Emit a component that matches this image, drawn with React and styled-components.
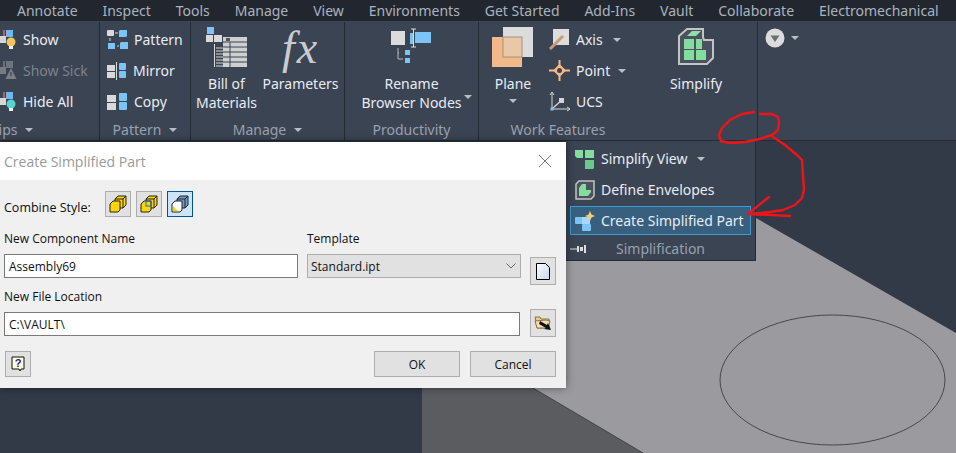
import styled, { createGlobalStyle } from "styled-components";

const Global = createGlobalStyle`
  html, body { margin: 0; padding: 0; background: #323947; }
  * { box-sizing: border-box; }
`;

const tabs = [
  "Annotate", "Inspect", "Tools", "Manage", "View", "Environments",
  "Get Started", "Add-Ins", "Vault", "Collaborate", "Electromechanical",
];

export default function App() {
  return (
    <Page>
      <Global />
      <TabBar>
        {tabs.map((t) => <Tab key={t}>{t}</Tab>)}
      </TabBar>

      <Ribbon>
        <Panel $width={100}>
          <Column>
            <SmallRow $pad={0}><ShowIcon bulb="#f3c45a" /><span>Show</span></SmallRow>
            <SmallRow $pad={0} $off><SickIcon /><span>Show Sick</span></SmallRow>
            <SmallRow $pad={0}><ShowIcon bulb="#58d3cf" /><span>Hide All</span></SmallRow>
          </Column>
          <PanelLabel $shift={-67}>ips<Caret $gap={8} /></PanelLabel>
        </Panel>
        <Panel $width={91}>
          <Column>
            <SmallRow $pad={7}><PatternIcon /><span>Pattern</span></SmallRow>
            <SmallRow $pad={7}><MirrorIcon /><span>Mirror</span></SmallRow>
            <SmallRow $pad={7}><CopyIcon /><span>Copy</span></SmallRow>
          </Column>
          <PanelLabel>Pattern<Caret $gap={8} /></PanelLabel>
        </Panel>
        <Panel $width={154}>
          <BigRow>
            <BigButton $width={71}><BomIcon /><span>Bill of<br />Materials</span></BigButton>
            <BigButton $width={75} $ml={1}><FxGlyph>fx</FxGlyph><span>Parameters</span></BigButton>
          </BigRow>
          <PanelLabel>Manage<Caret $gap={8} /></PanelLabel>
        </Panel>
        <Panel $width={134}>
          <BigRow>
            <BigButton $width={133}><RenameIcon /><span>Rename<br />Browser Nodes</span></BigButton>
            <RenameCaret><Caret /></RenameCaret>
          </BigRow>
          <PanelLabel>Productivity</PanelLabel>
        </Panel>
        <Panel $width={279}>
          <BigRow>
            <BigButton $width={66} $ml={1}>
              <PlaneIcon /><span>Plane</span><Caret $top={6} />
            </BigButton>
            <PlaneSide>
              <SmallRow $pad={3}><AxisIcon /><span>Axis</span><Caret $gap={4} /></SmallRow>
              <SmallRow $pad={3}><PointIcon /><span>Point</span><Caret $gap={2} /></SmallRow>
              <SmallRow $pad={3}><UcsIcon /><span>UCS</span></SmallRow>
            </PlaneSide>
            <BigButton $width={66} $ml={37}><SimplifyIcon /><span>Simplify</span></BigButton>
          </BigRow>
          <PanelLabel $shift={-120}>Work Features</PanelLabel>
        </Panel>
        <LastPanel>
          <DisplayIcon /><Caret $gap={6} />
        </LastPanel>
      </Ribbon>

      <Viewport>
        <Scene viewBox="0 0 956 312" width="956" height="312">
          <polygon points="756,77 956,192 956,312 643,312 533,247 422,247 422,3 756,3" fill="#9b9a9f" />
          <polygon points="422,240 533,247 643,312 422,312" fill="#5b5c60" />
          <path d="M533 247L643 312" stroke="#47474c" strokeWidth="1" fill="none" />
          <ellipse cx="832.5" cy="239" rx="112.5" ry="65" fill="none" stroke="#47474c" strokeWidth="1" />
        </Scene>
      </Viewport>

      <Flyout>
        <FlyRow $top={3}><SimplifyViewIcon /><span>Simplify View</span><Caret $gap={4} /></FlyRow>
        <FlyRow><EnvelopeIcon /><span>Define Envelopes</span></FlyRow>
        <FlyRow $active><SimplifiedPartIcon /><span>Create Simplified Part</span></FlyRow>
        <FlyFooter>
          <PinIcon />
          <span>Simplification</span>
        </FlyFooter>
      </Flyout>

      <Dialog>
        <TitleBar>
          <span>Create Simplified Part</span>
          <CloseX width="14" height="14" viewBox="0 0 14 14">
            <path d="M1 1l12 12M13 1L1 13" stroke="#777" strokeWidth="1" fill="none" />
          </CloseX>
        </TitleBar>
        <DialogBody>
          <StyleRow>
            <StyleLabel>Combine Style:</StyleLabel>
            <ToolButton><CombineIcon kind={0} /></ToolButton>
            <ToolButton><CombineIcon kind={1} /></ToolButton>
            <ToolButton $on><CombineIcon kind={2} /></ToolButton>
          </StyleRow>
          <FieldRow $top={14}>
            <Field $width={294}>
              <FieldLabel>New Component Name</FieldLabel>
              <TextBox>Assembly69</TextBox>
            </Field>
            <Field $width={214}>
              <FieldLabel>Template</FieldLabel>
              <SelectBox>
                <span>Standard.ipt</span>
                <svg width="10" height="6" viewBox="0 0 10 6"><path d="M.5.5L5 5 9.500.5" stroke="#666" fill="none" /></svg>
              </SelectBox>
            </Field>
            <ToolButton $height={28} $top={26}><DocIcon /></ToolButton>
          </FieldRow>
          <FieldRow $top={4}>
            <Field $width={516} $gap>
              <FieldLabel>New File Location</FieldLabel>
              <TextBox>C:\VAULT\</TextBox>
            </Field>
            <ToolButton $height={28} $top={20}><FolderIcon /></ToolButton>
          </FieldRow>
          <ActionRow>
            <ToolButton $ml={1}><HelpIcon /></ToolButton>
            <ActionButton $ml="auto">OK</ActionButton>
            <ActionButton>Cancel</ActionButton>
          </ActionRow>
        </DialogBody>
      </Dialog>

      <Scribble viewBox="0 0 956 453" width="956" height="453">
        <path
          d="M754 112l-12 2-12 6-8 8-3 7 2 6 9 2 15-1 15-3 12-4 6-5 1-8-1-5-6-3-12 0M773 137l12 8 12 10 5 5 1 15 1 15-2 8-7 7-12 5-13 2-20 2M769 197l-21 17 42 2"
          fill="none"
          stroke="#f01418"
          strokeWidth="2.4"
          strokeLinejoin="round"
          strokeLinecap="round"
        />
      </Scribble>
    </Page>
  );
}

/* ---------- ribbon icons ---------- */

function ShowIcon({ bulb }) {
  return (
    <svg width="17" height="22" viewBox="0 0 17 22" style={{ flexShrink: 0 }}>
      <rect x="3" y="1" width="2" height="13" fill="#c65a52" />
      <rect x="6" y="1" width="7" height="7" fill="#6ab9f2" />
      <rect x="0" y="7" width="6" height="7" fill="#d6d6d6" />
      <circle cx="11" cy="13" r="4.5" fill={bulb} />
      <rect x="9" y="17" width="4" height="3" fill="#eee" />
    </svg>
  );
}

function SickIcon() {
  return (
    <svg width="17" height="22" viewBox="0 0 17 22" style={{ flexShrink: 0 }}>
      <rect x="3" y="1" width="2" height="13" fill="#6b6f78" />
      <rect x="6" y="1" width="7" height="7" fill="#6d7480" />
      <rect x="0" y="7" width="6" height="7" fill="#777b83" />
      <path d="M11 8l5.500 11h-11z" fill="#7b7f86" />
      <rect x="10.400" y="12" width="1.200" height="4" fill="#3b4453" />
    </svg>
  );
}

function PatternIcon() {
  return (
    <svg width="21" height="21" viewBox="0 0 21 21" style={{ flexShrink: 0 }}>
      <rect x="0" y="1" width="7" height="6" rx="1" fill="#d9d9d9" />
      <path d="M13 1h7v6l-1 1h-7V2z" fill="#7cc4f5" />
      <path d="M1 14h7v6H1z" fill="#7cc4f5" />
      <path d="M14 13h7v7h-8v-6z" fill="#7cc4f5" />
      <path d="M8 4h3M3 9v3M10 17h2" stroke="#d9d9d9" strokeWidth="1" />
    </svg>
  );
}

function MirrorIcon() {
  return (
    <svg width="20" height="18" viewBox="0 0 20 18" style={{ flexShrink: 0 }}>
      <rect x="0" y="3" width="8" height="6" fill="#d9d9d9" />
      <rect x="0" y="10" width="8" height="6" fill="#d9d9d9" />
      <rect x="9" y="0" width="1" height="18" fill="#d9d9d9" />
      <rect x="12" y="1" width="7" height="7" rx="1" fill="#7cc4f5" />
      <rect x="12" y="9" width="7" height="7" rx="1" fill="#7cc4f5" />
    </svg>
  );
}

function CopyIcon() {
  return (
    <svg width="21" height="18" viewBox="0 0 21 18" style={{ flexShrink: 0 }}>
      <rect x="0" y="2" width="9" height="7" fill="#d9d9d9" />
      <rect x="0" y="10" width="9" height="7" fill="#d9d9d9" />
      <rect x="12" y="0" width="8" height="8" rx="1" fill="#7cc4f5" />
      <rect x="12" y="9" width="8" height="8" rx="1" fill="#7cc4f5" />
    </svg>
  );
}

function BomIcon() {
  return (
    <svg width="42" height="41" viewBox="0 0 42 41">
      <rect x="1" y="0" width="7" height="7" fill="#7cc4f5" />
      <rect x="0" y="8" width="7" height="7" fill="#d9d9d9" />
      <rect x="8" y="8" width="8" height="7" fill="#d9d9d9" />
      <rect x="8" y="17" width="1" height="23" fill="#d9d9d9" />
      <path d="M10 21h7M10 24h7M10 27h7M10 30h7M10 33h7M10 36h7M10 39h7" stroke="#d9d9d9" strokeWidth="1" />
      <rect x="17" y="10" width="24" height="30" fill="#cfcfcf" />
      <path d="M17 15h24M17 20h24M17 25h24M17 30h24M17 35h24M24 15v25" stroke="#3b4453" strokeWidth="1" />
      <rect x="20" y="11" width="4" height="3" fill="#555" />
    </svg>
  );
}

function RenameIcon() {
  return (
    <svg width="42" height="41" viewBox="0 0 42 41">
      <rect x="0" y="4" width="14" height="14" fill="#dcdcdc" />
      <rect x="19" y="6" width="3" height="11" fill="#7cc4f5" />
      <rect x="24" y="5" width="16" height="11" fill="#7cc4f5" />
      <path d="M20 2h5M22.500 2v18M20 20h5" stroke="#ddd" strokeWidth="1" fill="none" />
      <path d="M7 21v11h5M7 26h1" stroke="#b9b9b9" strokeWidth="1" fill="none" />
      <rect x="14" y="23" width="5" height="5" fill="#7cc4f5" />
      <rect x="14" y="31" width="5" height="5" fill="#7cc4f5" />
    </svg>
  );
}

function PlaneIcon() {
  return (
    <svg width="42" height="41" viewBox="0 0 42 41">
      <rect x="11" y="0" width="30" height="30" fill="#dcdcdc" />
      <rect x="0" y="10" width="30" height="30" fill="#f4b988" />
      <rect x="11" y="10" width="19" height="20" fill="#e9c8a9" stroke="#a88f78" strokeWidth="1" />
    </svg>
  );
}

function AxisIcon() {
  return (
    <svg width="21" height="21" viewBox="0 0 21 21" style={{ flexShrink: 0 }}>
      <rect x="4" y="0" width="16" height="16" fill="#dcdcdc" />
      <path d="M1 20L14 7" stroke="#c99a75" strokeWidth="3" />
    </svg>
  );
}

function PointIcon() {
  return (
    <svg width="21" height="21" viewBox="0 0 21 21" style={{ flexShrink: 0 }}>
      <path d="M0 10.500h6M15 10.500h6M10.500 0v6M10.500 15v6" stroke="#f4b988" strokeWidth="2" />
      <path d="M10.500 4L17 10.500 10.500 17 4 10.500z" fill="#f4b988" />
      <circle cx="10.500" cy="10.500" r="2.500" fill="#3b4453" />
    </svg>
  );
}

function UcsIcon() {
  return (
    <svg width="21" height="21" viewBox="0 0 21 21" style={{ flexShrink: 0 }}>
      <path d="M3 2v16h17M1 4l2-3 2 3M18 16l3 2-3 2" stroke="#d5d5d5" strokeWidth="1" fill="none" />
      <path d="M4 17L14 8" stroke="#d5d5d5" strokeWidth="1.400" />
      <rect x="10" y="7" width="5" height="5" fill="#d5d5d5" />
      <rect x="1.500" y="16.500" width="3" height="3" fill="#7cc4f5" />
    </svg>
  );
}

function SimplifyIcon() {
  return (
    <svg width="36" height="41" viewBox="0 0 36 41">
      <path d="M1 9L9 2h16v8l1 3h9v18l-6 6H1z" fill="#4a525f" stroke="#c4c4c4" strokeWidth="2" />
      <path d="M9 9l5-5h9l-5 5z" fill="#8fe0a8" />
      <rect x="6" y="12" width="10" height="10" fill="#84dd9f" />
      <rect x="18" y="12" width="6" height="10" fill="#84dd9f" />
      <rect x="6" y="23" width="10" height="10" fill="#84dd9f" />
      <rect x="18" y="23" width="10" height="10" fill="#84dd9f" />
    </svg>
  );
}

function DisplayIcon() {
  return (
    <svg width="20" height="20" viewBox="0 0 20 20" style={{ flexShrink: 0 }}>
      <circle cx="10" cy="10" r="9.500" fill="#dcdcdc" />
      <path d="M5.500 7.500h9L10 14z" fill="#6b6f78" />
    </svg>
  );
}

/* ---------- flyout icons ---------- */

function SimplifyViewIcon() {
  return (
    <svg width="20" height="20" viewBox="0 0 20 20" style={{ flexShrink: 0 }}>
      <path d="M0 1h8v8H2L0 7z" fill="#84dd9f" />
      <path d="M10 1h9v8h-9z" fill="#84dd9f" />
      <path d="M10 11h9v8l-1 1h-8z" fill="#6cc98a" />
    </svg>
  );
}

function EnvelopeIcon() {
  return (
    <svg width="20" height="20" viewBox="0 0 20 20" style={{ flexShrink: 0 }}>
      <path d="M4 1h15v15l-3 3H1V4z" fill="#4a525f" stroke="#c4c4c4" strokeWidth="1.500" />
      <path d="M4 8l3-4h4v6h5v2l-3 4H4z" fill="#84dd9f" />
    </svg>
  );
}

function SimplifiedPartIcon() {
  return (
    <svg width="20" height="20" viewBox="0 0 20 20" style={{ flexShrink: 0 }}>
      <rect x="0" y="6" width="8" height="7" rx="1" fill="#7cc4f5" />
      <rect x="7" y="6" width="8" height="7" fill="#a8d8f8" />
      <rect x="7" y="13" width="9" height="7" rx="1" fill="#7cc4f5" />
      <path d="M15 0l1.500 3.500L20 5l-3.500 1.500L15 10l-1.500-3.500L10 5l3.500-1.500z" fill="#f7d070" />
    </svg>
  );
}

function PinIcon() {
  return (
    <svg width="17" height="10" viewBox="0 0 17 10" style={{ flexShrink: 0 }}>
      <path d="M0 5h7" stroke="#ddd" strokeWidth="1" />
      <rect x="7" y="2" width="2" height="6" fill="#ddd" />
      <rect x="10" y="3" width="3" height="4" fill="#ddd" />
      <rect x="14" y="1" width="2" height="8" fill="#ddd" />
    </svg>
  );
}

/* ---------- dialog icons ---------- */

function CombineIcon({ kind }) {
  const on = kind === 2;
  return (
    <svg width="18" height="18" viewBox="0 0 18 18">
      <path d="M6 4l3-3h8v9l-3 3H6z" fill={on ? "#6f9cc9" : "#ffd400"} stroke="#222" strokeWidth="1" />
      <path d="M6 4h8v9M14 4l3-3" stroke="#222" strokeWidth="1" fill="none" />
      <path d="M1 9l3-3h7v9l-2 2H1z" fill={on ? "#fff" : "#ffd400"} stroke="#222" strokeWidth="1" />
      {kind === 1 && <rect x="6" y="6" width="5" height="5" fill="none" stroke="#1e6fc4" strokeWidth="1" />}
      {on && <path d="M2 11l5 5H2z" fill="#ffd400" />}
    </svg>
  );
}

function DocIcon() {
  return (
    <svg width="14" height="17" viewBox="0 0 14 17">
      <defs>
        <linearGradient id="docFill" x1="0" y1="0" x2="1" y2="1">
          <stop offset="0" stopColor="#fff" />
          <stop offset="1" stopColor="#c4d6ee" />
        </linearGradient>
      </defs>
      <path d="M.5.5h9l4 4v12H.5z" fill="url(#docFill)" stroke="#000" strokeWidth="1" />
    </svg>
  );
}

function FolderIcon() {
  return (
    <svg width="18" height="16" viewBox="0 0 18 16">
      <path d="M1 2h5l1 2h8v9H3z" fill="#e7c98f" stroke="#8c7346" strokeWidth="1" />
      <path d="M1 6l11-1 4 1-2 7H3z" fill="#f3dfb6" stroke="#8c7346" strokeWidth="1" />
      <path d="M6 6l7 4 1-2 3 7-7-1 2-1-7-4z" fill="#111" />
    </svg>
  );
}

function HelpIcon() {
  return (
    <svg width="14" height="16" viewBox="0 0 14 16">
      <path d="M1 1h12v12H10l-1 2-1-2H1z" fill="#fffce0" stroke="#111" strokeWidth="1" />
      <text x="7" y="11" textAnchor="middle" fontFamily="Liberation Sans, sans-serif" fontWeight="700" fontSize="11" fill="#1c1c8a">?</text>
    </svg>
  );
}

/* ---------- layout ---------- */

const Page = styled.div`
  position: relative;
  width: 956px;
  height: 453px;
  overflow: hidden;
  display: flex;
  flex-direction: column;
  background: #323947;
  font-family: "Noto Sans", sans-serif;
`;

const TabBar = styled.div`
  height: 21px;
  flex-shrink: 0;
  display: flex;
  align-items: center;
  gap: 24.9px;
  padding-left: 17px;
  background: #22272f;
`;

const Tab = styled.div`
  font-size: 14px;
  line-height: 18px;
  color: #a9b3bf;
  white-space: nowrap;
`;

const Ribbon = styled.div`
  height: 120px;
  flex-shrink: 0;
  display: flex;
  background: #3b4453;
  border-bottom: 1px solid #252a33;
  padding-top: 1px;
`;

const Panel = styled.div`
  width: ${(p) => p.$width}px;
  flex-shrink: 0;
  display: flex;
  flex-direction: column;
  border-right: 1px solid #252b35;
  overflow: hidden;
`;

const LastPanel = styled.div`
  flex: 1;
  display: flex;
  align-items: flex-start;
  padding: 6px 0 0 7px;
  & > span { margin-top: 8px; }
`;

const Column = styled.div`
  display: flex;
  flex-direction: column;
  padding-top: 2px;
  flex: 1;
`;

const SmallRow = styled.div`
  height: 31px;
  display: flex;
  align-items: center;
  gap: 6px;
  padding-left: ${(p) => p.$pad}px;
  font-size: 14px;
  white-space: nowrap;
  color: ${(p) => (p.$off ? "#7b828d" : "#e8ecf1")};
`;

const BigRow = styled.div`
  flex: 1;
  display: flex;
  position: relative;
  padding-top: 5px;
`;

const BigButton = styled.div`
  width: ${(p) => p.$width}px;
  margin-left: ${(p) => p.$ml || 0}px;
  flex-shrink: 0;
  display: flex;
  flex-direction: column;
  align-items: center;
  font-size: 14px;
  line-height: 19px;
  color: #e8ecf1;
  text-align: center;
  white-space: nowrap;
  svg { margin-bottom: 6px; }
`;

const RenameCaret = styled.div`
  position: absolute;
  right: 6px;
  top: 60px;
`;

const PlaneSide = styled.div`
  display: flex;
  flex-direction: column;
  margin-top: -3px;
  width: 80px;
  flex-shrink: 0;
`;

const FxGlyph = styled.div`
  height: 41px;
  margin-bottom: 6px;
  padding: 0 6px;
  font-family: "Liberation Serif", serif;
  font-style: italic;
  font-size: 46px;
  line-height: 41px;
  letter-spacing: 2px;
  color: #c9cbce;
`;

const PanelLabel = styled.div`
  height: 23px;
  flex-shrink: 0;
  display: flex;
  align-items: center;
  justify-content: center;
  padding-top: 2px;
  font-size: 14px;
  color: #98a1ae;
  white-space: nowrap;
  margin-left: ${(p) => p.$shift || 0}px;
`;

const Caret = styled.span`
  display: inline-block;
  width: 0;
  height: 0;
  flex-shrink: 0;
  margin-left: ${(p) => p.$gap || 0}px;
  margin-top: ${(p) => p.$top || 0}px;
  border-left: 4px solid transparent;
  border-right: 4px solid transparent;
  border-top: 4px solid #b9bec6;
`;

const Viewport = styled.div`
  flex: 1;
  position: relative;
`;

const Scene = styled.svg`
  position: absolute;
  left: 0;
  top: 0;
  display: block;
`;

const Flyout = styled.div`
  position: absolute;
  left: 566px;
  top: 141px;
  width: 190px;
  height: 120px;
  padding: 0 4px;
  display: flex;
  flex-direction: column;
  background: #3b4453;
  border-right: 1px solid #252b35;
  border-bottom: 1px solid #252b35;
`;

const FlyRow = styled.div`
  height: 29px;
  margin-top: ${(p) => p.$top || 2}px;
  display: flex;
  align-items: center;
  gap: 6px;
  padding-left: 4px;
  font-size: 14px;
  white-space: nowrap;
  color: #e8ecf1;
  border: 1px solid ${(p) => (p.$active ? "#3f9ad3" : "transparent")};
  background: ${(p) => (p.$active ? "#38607e" : "transparent")};
`;

const FlyFooter = styled.div`
  flex: 1;
  display: flex;
  align-items: center;
  padding-top: 2px;
  font-size: 14px;
  color: #98a1ae;
  span { margin-left: 29px; }
`;

const Dialog = styled.div`
  position: absolute;
  left: 0;
  top: 142px;
  width: 566px;
  height: 246px;
  background: #f0f0f0;
  box-shadow: 0 0 8px rgba(0, 0, 0, 0.45);
  font-family: "Open Sans", sans-serif;
  font-size: 12px;
  color: #111;
`;

const TitleBar = styled.div`
  height: 38px;
  display: flex;
  align-items: center;
  justify-content: space-between;
  padding: 0 14px 0 4px;
  background: #fff;
  font-size: 14px;
  color: #9a9a9a;
`;

const CloseX = styled.svg`
  display: block;
`;

const DialogBody = styled.div`
  display: flex;
  flex-direction: column;
  padding: 11px 10px 0 4px;
`;

const StyleRow = styled.div`
  display: flex;
  align-items: center;
  gap: 5px;
`;

const StyleLabel = styled.div`
  width: 96px;
  padding-top: 6px;
  font-size: 12.500px;
`;

const ToolButton = styled.div`
  width: 26px;
  height: ${(p) => p.$height || 26}px;
  margin-top: ${(p) => p.$top || 0}px;
  margin-left: ${(p) => p.$ml || 0}px;
  flex-shrink: 0;
  display: flex;
  align-items: center;
  justify-content: center;
  background: ${(p) => (p.$on ? "#cce4f7" : "#e1e1e1")};
  border: 1px solid ${(p) => (p.$on ? "#005499" : "#adadad")};
`;

const FieldRow = styled.div`
  display: flex;
  gap: 9px;
  margin-top: ${(p) => p.$top}px;
`;

const Field = styled.div`
  width: ${(p) => p.$width}px;
  flex-shrink: 0;
  margin-right: ${(p) => (p.$gap ? 1 : 0)}px;
`;

const FieldLabel = styled.div`
  height: 23px;
  line-height: 16px;
`;

const TextBox = styled.div`
  height: 24px;
  display: flex;
  align-items: center;
  padding-left: 4px;
  background: #fff;
  border: 1px solid #7a7a7a;
`;

const SelectBox = styled.div`
  height: 24px;
  display: flex;
  align-items: center;
  justify-content: space-between;
  padding: 0 4px 0 3px;
  background: #e1e1e1;
  border: 1px solid #adadad;
`;

const ActionRow = styled.div`
  display: flex;
  gap: 10px;
  margin-top: 14px;
`;

const ActionButton = styled.div`
  width: 86px;
  height: 26px;
  margin-left: ${(p) => p.$ml || 0};
  display: flex;
  align-items: center;
  justify-content: center;
  background: #e1e1e1;
  border: 1px solid #adadad;
`;

const Scribble = styled.svg`
  position: absolute;
  left: 0;
  top: 0;
  pointer-events: none;
`;
